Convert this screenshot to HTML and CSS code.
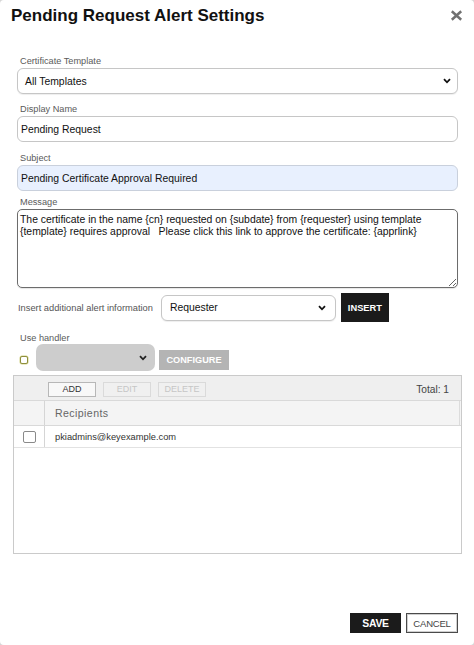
FILE: index.html
```html
<!DOCTYPE html>
<html lang="en">
<head>
<meta charset="utf-8">
<title>Pending Request Alert Settings</title>
<link rel="stylesheet" href="styles.css">
</head>
<body>
<div class="dialog">
  <div class="header">
    <h1 class="title">Pending Request Alert Settings</h1>
    <span class="close" aria-label="Close">
      <svg width="13" height="11" viewBox="0 0 13 11"><path d="M1.8 1.3 L11.2 9.7 M11.2 1.3 L1.8 9.7" stroke="#707070" stroke-width="2.5" stroke-linecap="butt" fill="none"/></svg>
    </span>
  </div>

  <div class="form">
    <div class="field">
      <div class="label">Certificate Template</div>
      <div class="input select select-main">
        <span>All Templates</span>
        <svg class="chev" width="8" height="6" viewBox="0 0 8 6"><path d="M1 1.2 L4 4.3 L7 1.2" stroke="#111" stroke-width="1.8" fill="none"/></svg>
      </div>
    </div>
    <div class="field field-2">
      <div class="label">Display Name</div>
      <div class="input">Pending Request</div>
    </div>
    <div class="field field-3">
      <div class="label">Subject</div>
      <div class="input autofill">Pending Certificate Approval Required</div>
    </div>
    <div class="field field-msg">
      <div class="label">Message</div>
      <textarea class="textarea">The certificate in the name {cn} requested on {subdate} from {requester} using template {template} requires approval   Please click this link to approve the certificate: {apprlink}</textarea>
    </div>

    <div class="insert-row">
      <span class="inline-label">Insert additional alert information</span>
      <div class="input select select-req">
        <span>Requester</span>
        <svg class="chev" width="8" height="6" viewBox="0 0 8 6"><path d="M1 1.2 L4 4.3 L7 1.2" stroke="#111" stroke-width="1.8" fill="none"/></svg>
      </div>
      <button class="btn btn-dark btn-insert">INSERT</button>
    </div>

    <div class="field field-handler">
      <div class="label label-tight">Use handler</div>
      <div class="handler-row">
        <span class="cb-small"></span>
        <div class="select-disabled">
          <svg class="chev" width="8" height="6" viewBox="0 0 8 6"><path d="M1 1.2 L4 4.3 L7 1.2" stroke="#222" stroke-width="1.8" fill="none"/></svg>
        </div>
        <button class="btn btn-configure">CONFIGURE</button>
      </div>
    </div>
  </div>

  <div class="grid">
    <div class="toolbar">
      <button class="btn tb-btn">ADD</button>
      <button class="btn tb-btn tb-disabled">EDIT</button>
      <button class="btn tb-btn tb-disabled">DELETE</button>
      <span class="total">Total: 1</span>
    </div>
    <div class="grid-head">
      <div class="cell-cb"></div>
      <div class="head-text">Recipients</div>
    </div>
    <div class="grid-row">
      <div class="cell-cb"><span class="cb"></span></div>
      <div class="row-text">pkiadmins@keyexample.com</div>
    </div>
    <div class="grid-empty"></div>
  </div>

  <div class="footer">
    <button class="btn btn-dark btn-save">SAVE</button>
    <button class="btn btn-cancel">CANCEL</button>
  </div>
</div>
</body>
</html>
```

FILE: styles.css
```css
html, body {
  margin: 0;
  padding: 0;
}
body {
  background: #d6d6d6;
  font-family: "Liberation Sans", Arial, sans-serif;
  color: #111;
}
.dialog {
  width: 474px;
  height: 645px;
  background: #fff;
  border-radius: 4px;
  box-sizing: border-box;
  display: flex;
  flex-direction: column;
  overflow: hidden;
}

/* header */
.header {
  display: flex;
  justify-content: space-between;
  align-items: flex-start;
  padding: 6px 11px 0 11px;
}
.title {
  margin: 0;
  font-size: 17px;
  line-height: 20px;
  font-weight: bold;
  color: #111;
}
.close {
  display: block;
  margin-top: 4px;
  line-height: 0;
}

/* form */
.form {
  padding: 29px 16px 0 17px;
}
.label {
  font-size: 9.2px;
  line-height: 12px;
  color: #5a5a5a;
  padding-left: 3px;
  margin-bottom: 1px;
}
.field-2 { margin-top: 9px; }
.field-3 { margin-top: 10px; }
.field-msg { margin-top: 5px; }
.field-handler { margin-top: 10px; }
.label-tight { margin-bottom: 0; }

.input {
  height: 26px;
  box-sizing: border-box;
  border: 1px solid #c6c6c6;
  border-radius: 6px;
  display: flex;
  align-items: center;
  padding: 0 3px;
  font-size: 10.4px;
  color: #111;
  background: #fff;
}
.select {
  justify-content: space-between;
  box-shadow: 0 1px 1px rgba(0, 0, 0, 0.07);
}
.select-main {
  padding: 0 6px 0 7px;
}
.chev {
  display: block;
  flex: none;
}
.autofill {
  background: #e8f0fe;
  border-color: #c9d0dc;
}
.textarea {
  display: block;
  width: 100%;
  height: 79px;
  box-sizing: border-box;
  margin: 0;
  border: 1px solid #6c6c6c;
  border-radius: 5px;
  padding: 4px 2px;
  font-family: "Liberation Sans", Arial, sans-serif;
  font-size: 10.4px;
  line-height: 12px;
  color: #111;
  resize: vertical;
  outline: none;
  box-shadow: 0 1px 1px rgba(0, 0, 0, 0.1);
}

/* buttons */
.btn {
  font-family: "Liberation Sans", Arial, sans-serif;
  padding: 0;
  margin: 0;
  border: 0;
  box-sizing: border-box;
  cursor: pointer;
}
.btn-dark {
  background: #1b1b1b;
  color: #fff;
  font-weight: bold;
}

/* insert row */
.insert-row {
  display: flex;
  align-items: center;
  margin-top: 5px;
}
.inline-label {
  font-size: 9.3px;
  color: #555;
  margin-left: 1px;
  margin-right: 8px;
}
.select-req {
  width: 175px;
  padding: 0 9px 0 8px;
}
.btn-insert {
  width: 48px;
  height: 29px;
  margin-left: 5px;
  font-size: 9.3px;
}

/* handler */
.handler-row {
  display: flex;
  align-items: center;
  height: 27px;
}
.cb-small {
  width: 8px;
  height: 8px;
  box-sizing: border-box;
  border: 1px solid #8e8e3c;
  border-radius: 2px;
  margin-left: 3px;
  align-self: flex-end;
  margin-bottom: 7px;
  background: #fff;
  box-shadow: 0 0 0 0.5px #d4d48a;
}
.select-disabled {
  width: 119px;
  height: 27px;
  margin-left: 8px;
  box-sizing: border-box;
  background: #cdcdcd;
  border-radius: 7px;
  display: flex;
  align-items: center;
  justify-content: flex-end;
  padding-right: 8px;
}
.btn-configure {
  width: 70px;
  height: 20px;
  margin-left: 4px;
  background: #b4b4b4;
  color: #fff;
  font-weight: bold;
  font-size: 9.2px;
  align-self: flex-end;
  margin-bottom: 1px;
}

/* grid */
.grid {
  margin: 4px 12px 0 13px;
  height: 179px;
  box-sizing: border-box;
  border: 1px solid #cacaca;
  display: flex;
  flex-direction: column;
}
.toolbar {
  height: 24px;
  box-sizing: border-box;
  padding: 2px 12px 0 34px;
  background: #efefef;
  display: flex;
  align-items: center;
  gap: 7px;
}
.tb-btn {
  width: 48px;
  height: 15px;
  font-size: 9px;
  color: #333;
  background: #f8f8f8;
  border: 1px solid #b7b7b7;
}
.tb-disabled {
  color: #c6c6c6;
  background: #f0f0f0;
  border-color: #dadada;
}
.total {
  margin-left: auto;
  font-size: 10.2px;
  color: #444;
}
.grid-head {
  display: flex;
  height: 25px;
  box-sizing: border-box;
  border-top: 1px solid #d9d9d9;
  background: #f4f4f4;
  padding-right: 1px;
}
.cell-cb {
  width: 31px;
  flex: none;
  box-sizing: border-box;
  border-right: 1px solid #d5d5d5;
  display: flex;
  align-items: center;
  justify-content: center;
}
.head-text {
  flex: 1;
  display: flex;
  align-items: center;
  padding-left: 10px;
  font-size: 10.6px;
  letter-spacing: 0.4px;
  color: #666;
  border-right: 1px solid #dcdcdc;
}
.grid-row {
  display: flex;
  height: 23px;
  box-sizing: border-box;
  border-top: 1px solid #d9d9d9;
  border-bottom: 1px solid #e2e2e2;
}
.cb {
  display: block;
  width: 13px;
  height: 12px;
  box-sizing: border-box;
  border: 1px solid #8a8a8a;
  border-radius: 2px;
  background: #fff;
}
.row-text {
  flex: 1;
  display: flex;
  align-items: center;
  padding-left: 10px;
  font-size: 9.3px;
  color: #333;
}
.grid-empty {
  flex: 1;
}

/* footer */
.footer {
  display: flex;
  justify-content: flex-end;
  gap: 5px;
  padding-right: 16px;
  margin-top: 59px;
}
.btn-save {
  width: 51px;
  height: 20px;
  font-size: 10.4px;
  letter-spacing: -0.3px;
}
.btn-cancel {
  width: 52px;
  height: 20px;
  font-size: 9.5px;
  letter-spacing: -0.2px;
  color: #444;
  background: #fff;
  border: 1px solid #4a4a4a;
  box-shadow: inset 0 0 0 1px #cfcfcf;
}
```
